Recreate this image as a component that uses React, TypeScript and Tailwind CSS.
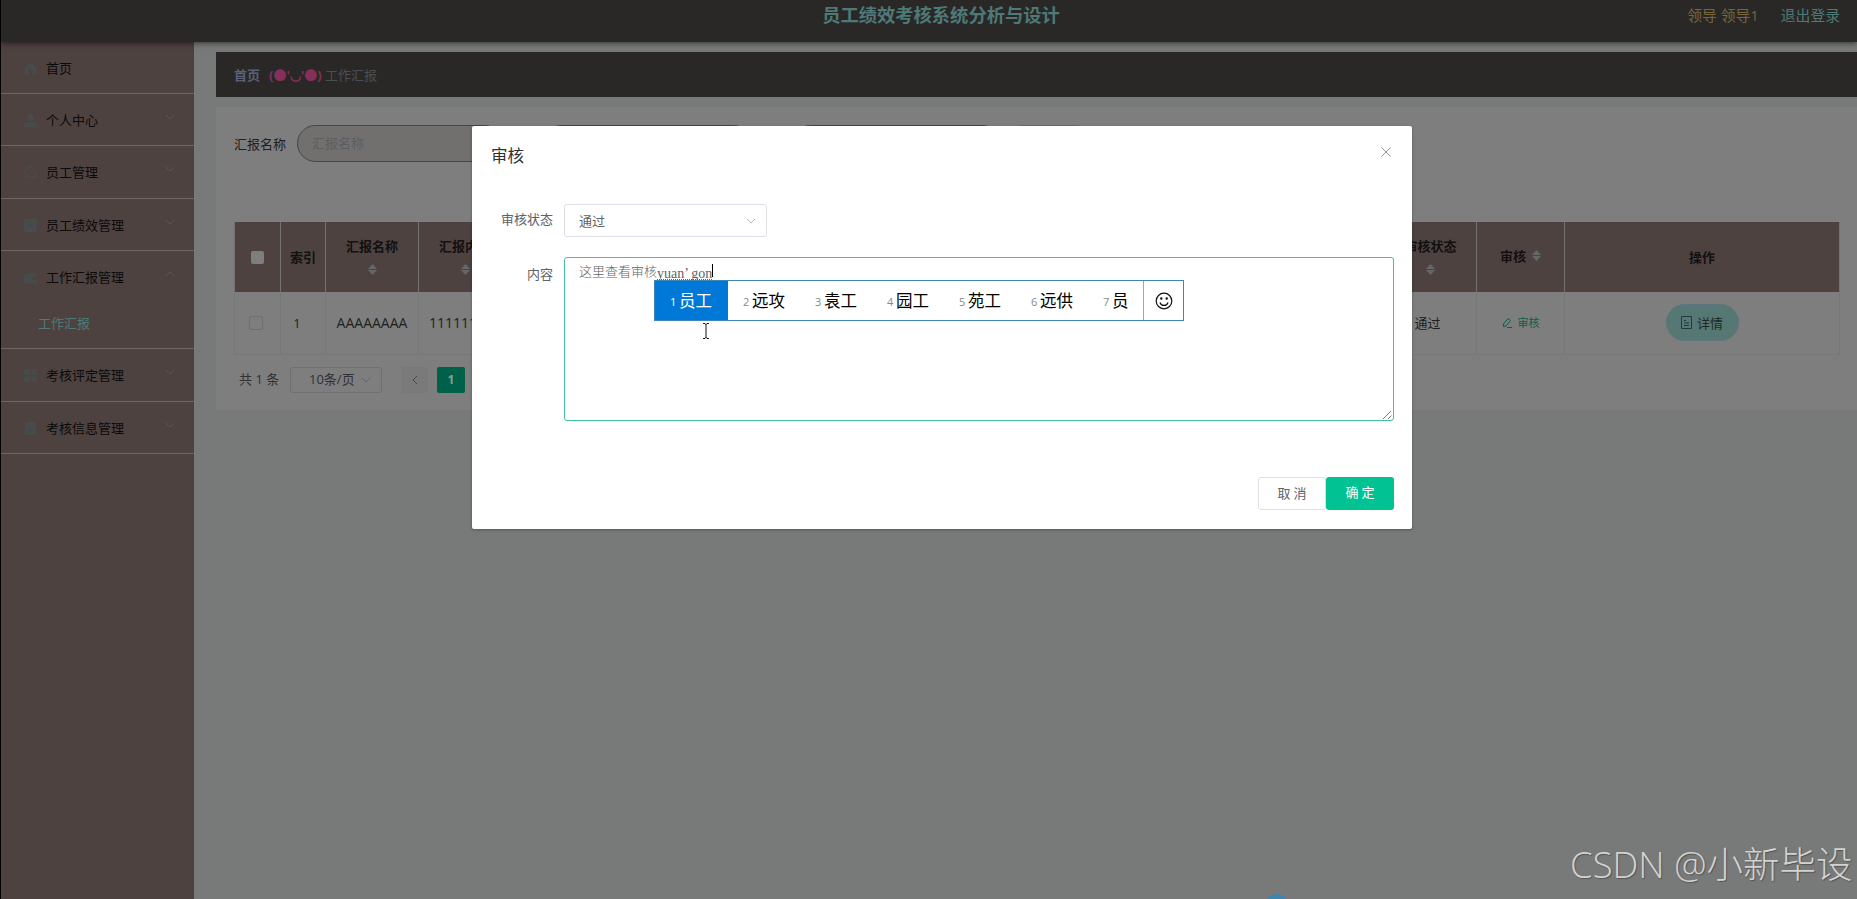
import React from 'react';

interface MenuItem {
  label: string;
  icon: string;
  box: string;
  arrow?: 'down' | 'up';
  child?: string;
}

const menu: MenuItem[] = [
  { label: '首页', icon: 'home', box: 'h-[52px]' },
  { label: '个人中心', icon: 'user', box: 'h-[52px]', arrow: 'down' },
  { label: '员工管理', icon: 'bell', box: 'h-[53px]', arrow: 'down' },
  { label: '员工绩效管理', icon: 'chart', box: 'h-[52px]', arrow: 'down' },
  { label: '工作汇报管理', icon: 'wallet', box: 'h-[98px]', arrow: 'up', child: '工作汇报' },
  { label: '考核评定管理', icon: 'grid', box: 'h-[53px]', arrow: 'down' },
  { label: '考核信息管理', icon: 'clipboard', box: 'h-[52px]', arrow: 'down' },
];

const candidates = ['员工', '远攻', '袁工', '园工', '苑工', '远供', '员'];

const MenuIcon: React.FC<{ name: string }> = ({ name }) => (
  <svg className="w-[13px] h-[13px] shrink-0" viewBox="0 0 13 13" fill="#484b4c">
    {name === 'home' && <path d="M6.5 0.5L13 6v1h-1v5.5H8.5V9a2 2 0 0 0-4 0v3.5H1V7H0V6z" />}
    {name === 'user' && (
      <>
        <circle cx="6.5" cy="3.5" r="3.4" />
        <path d="M0 13v-2a3 3 0 0 1 3-3h7a3 3 0 0 1 3 3v2z" />
      </>
    )}
    {name === 'bell' && (
      <path d="M1.5 10.5V6a5 5 0 0 1 8-3.800M11.500 4.500v6.500H3M0 11.500h13M1 12L12 1M6.500 0v1" fill="none" stroke="#484b4c" />
    )}
    {name === 'chart' && (
      <>
        <rect width="13" height="13" rx="1" />
        <path d="M2.500 8.500l2.500-3 2 2 3.500-4" fill="none" stroke="#4e4241" />
      </>
    )}
    {name === 'wallet' && <path d="M0 3h5l1-2 4 1v1h2v3H8v3h5v3.500H0z" />}
    {name === 'grid' && <path d="M0 0h5.700v5.700H0zM7.300 0H13v5.700H7.300zM0 7.300h5.700V13H0zM7.300 7.300H13V13H7.300z" />}
    {name === 'clipboard' && (
      <>
        <path d="M1 1h3V0h5v1h3v12H1z" />
        <path d="M4.200 5.500l4.500 4.500M8.700 5.500L4.200 10" stroke="#4e4241" />
      </>
    )}
  </svg>
);

const Chevron: React.FC<{ className?: string; up?: boolean }> = ({ className = '', up }) => (
  <svg className={`w-[10px] h-[6px] ${className}`} viewBox="0 0 10 6" fill="none" stroke="currentColor">
    <path d={up ? 'M1 5l4-4 4 4' : 'M1 1l4 4 4-4'} />
  </svg>
);

const Sort = () => (
  <svg className="w-[9px] h-[11px]" viewBox="0 0 9 11" fill="#656768">
    <path d="M4.500 0L9 5H0zM4.500 11L0 6h9z" />
  </svg>
);

const Sidebar = () => (
  <aside className="w-[193px] h-full bg-[#4e4241]">
    {menu.map((item) => (
      <div key={item.label} className={`${item.box} border-b border-[#6c6665]`}>
        <div className="h-[52px] flex items-center pl-[23px] pr-[19px] text-[#0b0a0a]">
          <MenuIcon name={item.icon} />
          <span className="ml-[9px] flex-1">{item.label}</span>
          {item.arrow && <Chevron up={item.arrow === 'up'} className="text-[#5a5453] mb-[6px]" />}
        </div>
        {item.child && <div className="h-10 leading-10 pl-[37px] text-[#4d7977]">{item.child}</div>}
      </div>
    ))}
  </aside>
);

const SearchBar = () => (
  <div className="flex items-center h-[37px]">
    <span className="w-[63px] text-[#1f2021]">汇报名称</span>
    <div className="w-[206px] h-[37px] shrink-0 rounded-full border border-[#4e4241] bg-[#72706e] pl-[14px] leading-[35px] text-[#5b5d61]">
      汇报名称
    </div>
    <div className="ml-[40px] w-[209px] h-[37px] shrink-0 rounded-full border border-[#4e4241] bg-[#72706e]" />
    <div className="ml-[40px] w-[209px] h-[37px] shrink-0 rounded-full border border-[#4e4241] bg-[#72706e]" />
    <div className="ml-[4px] w-[88px] h-[37px] shrink-0 rounded-full border border-[#6c6c6c] bg-[#567875]" />
  </div>
);

const Table = () => (
  <table className="table-fixed w-[1606px] border-collapse text-center text-[#1d1e20]">
    <colgroup>
      <col className="w-[46px]" />
      <col className="w-[45px]" />
      <col className="w-[93px]" />
      <col className="w-[93px]" />
      <col />
      <col className="w-[92px]" />
      <col className="w-[88px]" />
      <col className="w-[275px]" />
    </colgroup>
    <thead>
      <tr className="h-[70px] bg-[#4e4241] text-[#121010] font-bold [&>td]:border-x [&>td]:border-[#747272]">
        <td><span className="block mx-auto w-[13px] h-[13px] rounded-[2px] bg-[#7e7e7e]" /></td>
        <td>索引</td>
        <td><div className="flex flex-col items-center gap-[9px] pb-[3px]"><span>汇报名称</span><Sort /></div></td>
        <td><div className="flex flex-col items-center gap-[9px] pb-[3px]"><span>汇报内容</span><Sort /></div></td>
        <td />
        <td><div className="flex flex-col items-center gap-[9px] pb-[3px]"><span>审核状态</span><Sort /></div></td>
        <td><div className="flex items-center justify-center gap-[6px] pb-[3px]"><span>审核</span><Sort /></div></td>
        <td>操作</td>
      </tr>
    </thead>
    <tbody>
      <tr className="h-[62px] [&>td]:border [&>td]:border-[#767777] [&>td]:border-t-0">
        <td><span className="block ml-[14px] w-[14px] h-[14px] rounded-[2px] border border-[#6e6f71]" /></td>
        <td className="pr-[12px]">1</td>
        <td className="text-sm">AAAAAAAA</td>
        <td className="text-left pl-[10px] text-sm">1111111</td>
        <td />
        <td className="pr-[6px]">通过</td>
        <td>
          <div className="flex items-center justify-center gap-[5px] text-[11px] text-[#0b5f48]">
            <svg className="w-[11px] h-[11px]" viewBox="0 0 11 11" fill="none" stroke="currentColor">
              <path d="M1.500 7L6 1.500l2.500 2L4 9l-2.500.5zM5 10.500h5" />
            </svg>
            审核
          </div>
        </td>
        <td>
          <div className="mx-auto w-[73px] h-[37px] rounded-full border border-[#5f7380] bg-[#567875] flex items-center justify-center gap-[5px]">
            <svg className="w-[11px] h-[13px]" viewBox="0 0 11 13" fill="none" stroke="#26383a">
              <path d="M.5.5h10v12H.5zM3 4.500h2M3 7h5M3 9.500h5" />
            </svg>
            <span className="text-[#1d2929]">详情</span>
          </div>
        </td>
      </tr>
    </tbody>
  </table>
);

const Pager = () => (
  <div className="flex items-center mt-3 pl-[5px] text-xs text-[#303133]">
    <span className="w-[51px] text-[13px]">共 1 条</span>
    <div className="w-[92px] h-[26px] rounded-[3px] border border-[#6e6f71] flex items-center pl-[18px] pr-[10px] text-[13px]">
      <span className="flex-1">10条/页</span>
      <Chevron className="text-[#606266]" />
    </div>
    <div className="ml-[19px] w-[27px] h-[26px] rounded-[2px] bg-[#7a7a7b] flex items-center justify-center">
      <Chevron className="rotate-90 text-[#4a4c50]" />
    </div>
    <div className="ml-[9px] w-[28px] h-[26px] rounded-[2px] bg-[#006149] text-[#8b9a95] font-bold flex items-center justify-center">1</div>
  </div>
);

const Ime = () => (
  <div className="absolute left-[182px] top-[154px] w-[530px] h-[41px] flex border border-[#3c86b8] bg-white text-[16.500px] text-black">
    {candidates.map((word, i) => (
      <div
        key={word}
        className={`h-full flex items-center shrink-0 pl-[15px] ${i === 0 ? 'bg-[#0078d7] text-white' : ''} ${i === 6 ? 'w-[55px]' : i === 0 ? 'w-[73px]' : 'w-[72px]'}`}
      >
        <span className={`w-[9px] text-[11px] pt-[3px] ${i === 0 ? 'text-white' : 'text-[#888]'}`}>{i + 1}</span>
        <span>{word}</span>
      </div>
    ))}
    <div className="flex-1 h-full border-l border-[#7fb1d2] flex items-center justify-center">
      <svg className="w-[18px] h-[18px]" viewBox="0 0 18 18" fill="none" stroke="#111" strokeWidth="1.200">
        <circle cx="9" cy="9" r="7.800" />
        <path d="M5 10.500a4.200 4.200 0 0 0 8 0" />
        <circle cx="6.300" cy="6.500" r=".6" fill="#111" />
        <circle cx="11.700" cy="6.500" r=".6" fill="#111" />
      </svg>
    </div>
  </div>
);

const ReviewDialog = () => (
  <div className="absolute left-[471px] top-[126px] w-[940px] h-[403px] rounded-[2px] bg-white shadow-[0_1px_3px_rgba(0,0,0,0.3)] text-[#606266]">
    <div className="flex items-start justify-between pt-[18px] pl-[19px] pr-[21px]">
      <span className="text-[16.500px] leading-6 text-[#303133]">审核</span>
      <svg className="w-[10px] h-[10px] mt-[3px]" viewBox="0 0 10 10" stroke="#909399">
        <path d="M.5.5l9 9M9.500.5l-9 9" />
      </svg>
    </div>
    <div className="flex mt-[36px]">
      <span className="w-[92px] pr-[11px] text-right leading-[31px]">审核状态</span>
      <div className="w-[203px] h-[33px] rounded-[3px] border border-[#dcdfe6] flex items-center pl-[14px] pr-[10px]">
        <span className="flex-1">通过</span>
        <Chevron className="text-[#b4b8c0]" />
      </div>
    </div>
    <div className="flex mt-[20px]">
      <span className="w-[92px] pr-[11px] text-right leading-[34px]">内容</span>
      <div className="relative w-[830px] h-[164px] rounded-[3px] border border-[#46bfa0] pl-[14px] pt-[4px] leading-5 flex items-start">
        <span className="font-['Liberation_Serif','Noto_Sans_CJK_SC',serif] font-light">这里查看审核</span>
        <span className="font-['Liberation_Serif',serif] text-[14px] leading-[17px] mt-[3px] h-[15px] border-b border-dotted border-[#606266]">yuan’ gon</span>
        <span className="w-px h-[13px] mt-[2px] bg-black" />
        <svg className="absolute right-[1px] bottom-[1px] w-[9px] h-[9px]" viewBox="0 0 9 9" stroke="#777">
          <path d="M0 9L8 1M5 9l3.500-3.500" />
        </svg>
      </div>
    </div>
    <div className="flex justify-end mt-[56px] pr-[18px] text-[13px]">
      <div className="w-[68px] h-[33px] rounded-[3px] border border-[#dcdfe6] text-center leading-[30px] tracking-[3px] pl-[3px]">取消</div>
      <div className="w-[68px] h-[33px] rounded-[3px] bg-[#00c292] text-white text-center leading-[31px] tracking-[3px] pl-[3px]">确定</div>
    </div>
    <Ime />
    <svg className="absolute left-[230px] top-[197px] w-[8px] h-[16px]" viewBox="0 0 8 16" fill="none" stroke="#111">
      <path d="M1 .5h2l1 1 1-1h2M4 1v14M1 15.500h2l1-1 1 1h2" />
    </svg>
  </div>
);

const App: React.FC = () => {
  return (
    <div className="relative w-[1857px] h-[899px] overflow-hidden bg-[#787a79] border-l border-black flex flex-col text-[13px] leading-[18px] font-['Open_Sans','Noto_Sans_CJK_SC',sans-serif]">
      <header className="relative z-10 h-[42px] shrink-0 bg-[#2a2827] shadow-[0_1px_6px_rgba(0,0,0,0.6)] grid grid-cols-3">
        <span />
        <h1 className="text-center text-[18.300px] leading-[30px] font-bold text-[#4d7977] pl-[24px]">员工绩效考核系统分析与设计</h1>
        <div className="flex justify-end gap-[22px] pr-[17px] text-[14.800px] leading-[30px]">
          <span className="text-[#75673a]">领导 领导1</span>
          <span className="text-[#4d7977]">退出登录</span>
        </div>
      </header>
      <div className="flex flex-1 min-h-0">
        <Sidebar />
        <main className="flex-1 min-w-0 pl-[22px] pt-[10px]">
          <div className="h-[45px] bg-[#2a2827] flex items-center pl-[18px]">
            <span className="font-bold text-[#5b6078]">首页</span>
            <span className="ml-[9px] w-[47px] font-bold text-[#852f5a] whitespace-nowrap">(●'◡'●)</span>
            <span className="ml-[9px] text-[#4b4e54]">工作汇报</span>
          </div>
          <section className="mt-[10px] h-[303px] bg-[#7e7e7e] pl-[18px] pt-[18px] overflow-hidden">
            <SearchBar />
            <div className="mt-[60px]">
              <Table />
              <Pager />
            </div>
          </section>
        </main>
      </div>
      <ReviewDialog />
      <div className="absolute left-[1265px] top-[894px] w-[22px] h-[22px] rounded-full bg-[#3d85b3]" />
      <div className="absolute left-[1569px] top-[841px] whitespace-nowrap text-[36.500px] leading-[46px] font-light text-[#d2d2d2] [text-shadow:1px_1px_1px_#555]">
        CSDN @小新毕设
      </div>
    </div>
  );
};

export default App;
